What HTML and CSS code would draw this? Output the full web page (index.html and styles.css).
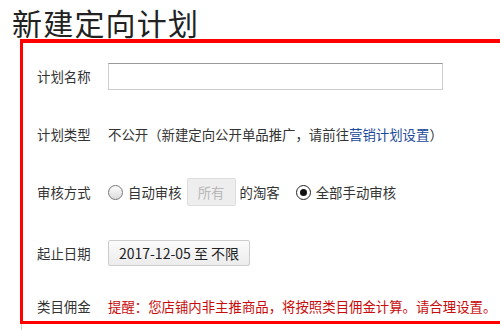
FILE: index.html
```html
<!DOCTYPE html>
<html lang="zh-CN">
<head>
<meta charset="utf-8">
<title>新建定向计划</title>
<link rel="stylesheet" href="styles.css">
</head>
<body>
  <h1 class="page-title">新建定向计划</h1>
  <div class="plan-box">
    <div class="form-row">
      <span class="form-label">计划名称</span>
      <input class="text-input" type="text">
    </div>
    <div class="form-row">
      <span class="form-label">计划类型</span>
      <span class="form-text">不公开（新建定向公开单品推广，请前往<a class="link" href="#">营销计划设置</a>）</span>
    </div>
    <div class="form-row">
      <span class="form-label">审核方式</span>
      <span class="radio"></span>
      <span class="form-text radio-text">自动审核</span>
      <span class="btn-disabled">所有</span>
      <span class="form-text after-btn">的淘客</span>
      <span class="radio radio-checked"></span>
      <span class="form-text radio-text">全部手动审核</span>
    </div>
    <div class="form-row row-date">
      <span class="form-label">起止日期</span>
      <span class="date-btn">2017-12-05 至 不限</span>
    </div>
    <div class="form-row row-last">
      <span class="form-label">类目佣金</span>
      <span class="form-text warn">提醒：您店铺内非主推商品，将按照类目佣金计算。请合理设置。</span>
    </div>
  </div>
  <div class="under-line"></div>
</body>
</html>
```
FILE: styles.css
```css
html, body {
  margin: 0;
  padding: 0;
  background: #fff;
}
body {
  font-family: "Noto Sans CJK SC", "Noto Sans", sans-serif;
  color: #333;
  width: 500px;
  height: 330px;
  overflow: hidden;
}
.page-title {
  margin: 0 0 -5px 0;
  padding: 0 0 0 12px;
  font-size: 30px;
  line-height: 44px;
  font-weight: normal;
  color: #222;
  letter-spacing: 1.2px;
}
.plan-box {
  position: relative;
  margin-left: 20px;
  width: 472px;
  border: 3px solid #f00;
  border-top-width: 4px;
  padding: 19px 0 0 14px;
  height: 259px;
  box-sizing: content-box;
  display: flex;
  flex-direction: column;
  gap: 30px;
}
.form-row {
  display: flex;
  align-items: center;
  height: 28px;
  font-size: 13.4px;
  white-space: nowrap;
}
.row-date {
  margin-top: 3px;
}
.row-last {
  height: 20px;
  margin-top: -1px;
}
.form-label {
  width: 71px;
  flex: none;
  color: #333;
}
.form-text {
  color: #333;
}
.link {
  color: #1d4a9a;
  text-decoration: none;
}
.text-input {
  width: 335px;
  height: 27px;
  box-sizing: border-box;
  border: 1px solid #ccc;
  border-top-color: #999;
  margin: 0;
  padding: 0 6px;
  outline: none;
}
.radio {
  width: 15px;
  height: 15px;
  box-sizing: border-box;
  border-radius: 50%;
  border: 1px solid #777;
  background: linear-gradient(#fdfdfd, #dcdcdc);
  flex: none;
  position: relative;
}
.radio-checked {
  border-color: #222;
  background: #fff;
  margin-left: 16px;
}
.radio-checked::after {
  content: "";
  position: absolute;
  left: 3px;
  top: 3px;
  width: 7px;
  height: 7px;
  border-radius: 50%;
  background: #111;
}
.radio-text {
  margin-left: 5px;
}
.btn-disabled {
  margin-left: 5px;
  width: 49px;
  height: 28px;
  box-sizing: border-box;
  border: 1px solid #ddd;
  border-radius: 2px;
  background: #eeeeee;
  color: #b8b8b8;
  display: flex;
  align-items: center;
  justify-content: center;
}
.after-btn {
  margin-left: 4px;
}
.date-btn {
  height: 26px;
  width: 142px;
  box-sizing: border-box;
  border: 1px solid #ccc;
  border-radius: 2px;
  background: linear-gradient(#fbfbfb, #ececec);
  font-size: 14px;
  color: #222;
  display: flex;
  align-items: center;
  justify-content: center;
}
.warn {
  color: #c80c0c;
}
.under-line {
  margin-left: 21px;
  height: 10px;
  border-left: 1px solid #ccc;
}
```
